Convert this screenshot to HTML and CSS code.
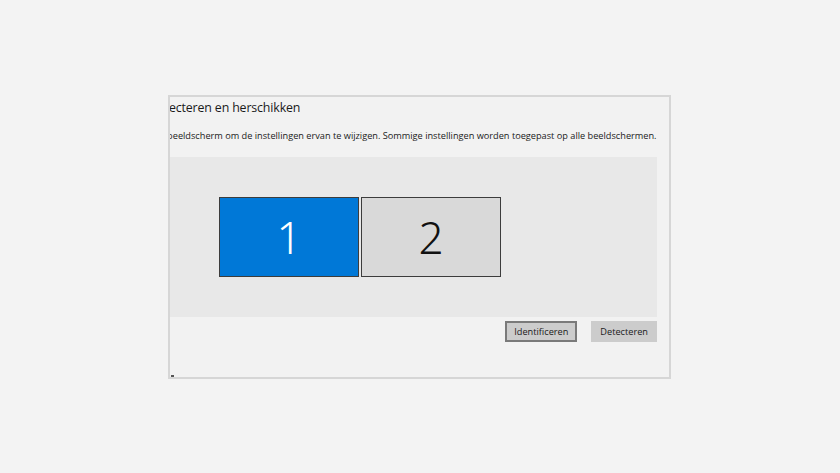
FILE: index.html
```html
<!DOCTYPE html>
<html lang="nl">
<head>
    <meta charset="UTF-8">
    <title>Beeldscherm</title>
    <link rel="stylesheet" href="styles.css">
</head>
<body>
    <div class="window">
        <div class="content">
            <h2 class="title">Detecteren en herschikken</h2>
            <p class="desc">Selecteer hieronder een beeldscherm om de instellingen ervan te wijzigen. Sommige instellingen worden toegepast op alle beeldschermen.</p>

            <div class="arrange">
                <div class="monitor active">1</div>
                <div class="monitor">2</div>
            </div>

            <div class="actions">
                <button class="button focused">Identificeren</button>
                <button class="button">Detecteren</button>
            </div>
        </div>
        <span class="cursor-mark"></span>
    </div>
</body>
</html>
```

FILE: styles.css
```css
* {
    margin: 0;
    padding: 0;
    box-sizing: border-box;
}

body {
    background-color: #f3f3f3;
    font-family: "Open Sans", "Noto Sans", sans-serif;
    color: #1a1a1a;
}

/* Window */
.window {
    position: relative;
    width: 503px;
    height: 284px;
    margin: 95px 0 0 168px;
    border: 2px solid #d6d6d6;
    background-color: #f2f2f2;
    overflow: hidden;
}

.content {
    padding: 0 12px 0 0;
}

.title {
    margin-top: 2px;
    font-size: 12.4px;
    font-weight: 400;
    line-height: 18px;
    letter-spacing: -0.15px;
    white-space: nowrap;
    text-indent: -21px;
}

.desc {
    margin-top: 12px;
    font-size: 9.2px;
    line-height: 14px;
    white-space: nowrap;
    text-indent: -108px;
}

/* Arrangement area */
.arrange {
    display: flex;
    gap: 2px;
    height: 160px;
    margin-top: 14px;
    padding: 40px 0 0 49px;
    background-color: #e8e8e8;
}

.monitor {
    display: flex;
    align-items: center;
    justify-content: center;
    width: 140px;
    height: 80px;
    border: 1px solid #3c3c3c;
    background-color: #d9d9d9;
    color: #111;
    font-family: "Noto Sans", sans-serif;
    font-size: 44px;
    font-weight: 300;
}

.monitor.active {
    background-color: #0078d7;
    color: #fff;
}

/* Buttons */
.actions {
    display: flex;
    justify-content: flex-end;
    gap: 14px;
    margin-top: 4px;
}

.button {
    height: 21px;
    padding: 0 7px;
    border: 2px solid transparent;
    background-color: #cccccc;
    color: #1a1a1a;
    font-family: "Open Sans", "Noto Sans", sans-serif;
    font-size: 9.2px;
}

.button.focused {
    border-color: #7a7a7a;
}

.cursor-mark {
    position: absolute;
    left: 1px;
    bottom: 0;
    width: 3px;
    height: 2px;
    background-color: #555;
}
```
